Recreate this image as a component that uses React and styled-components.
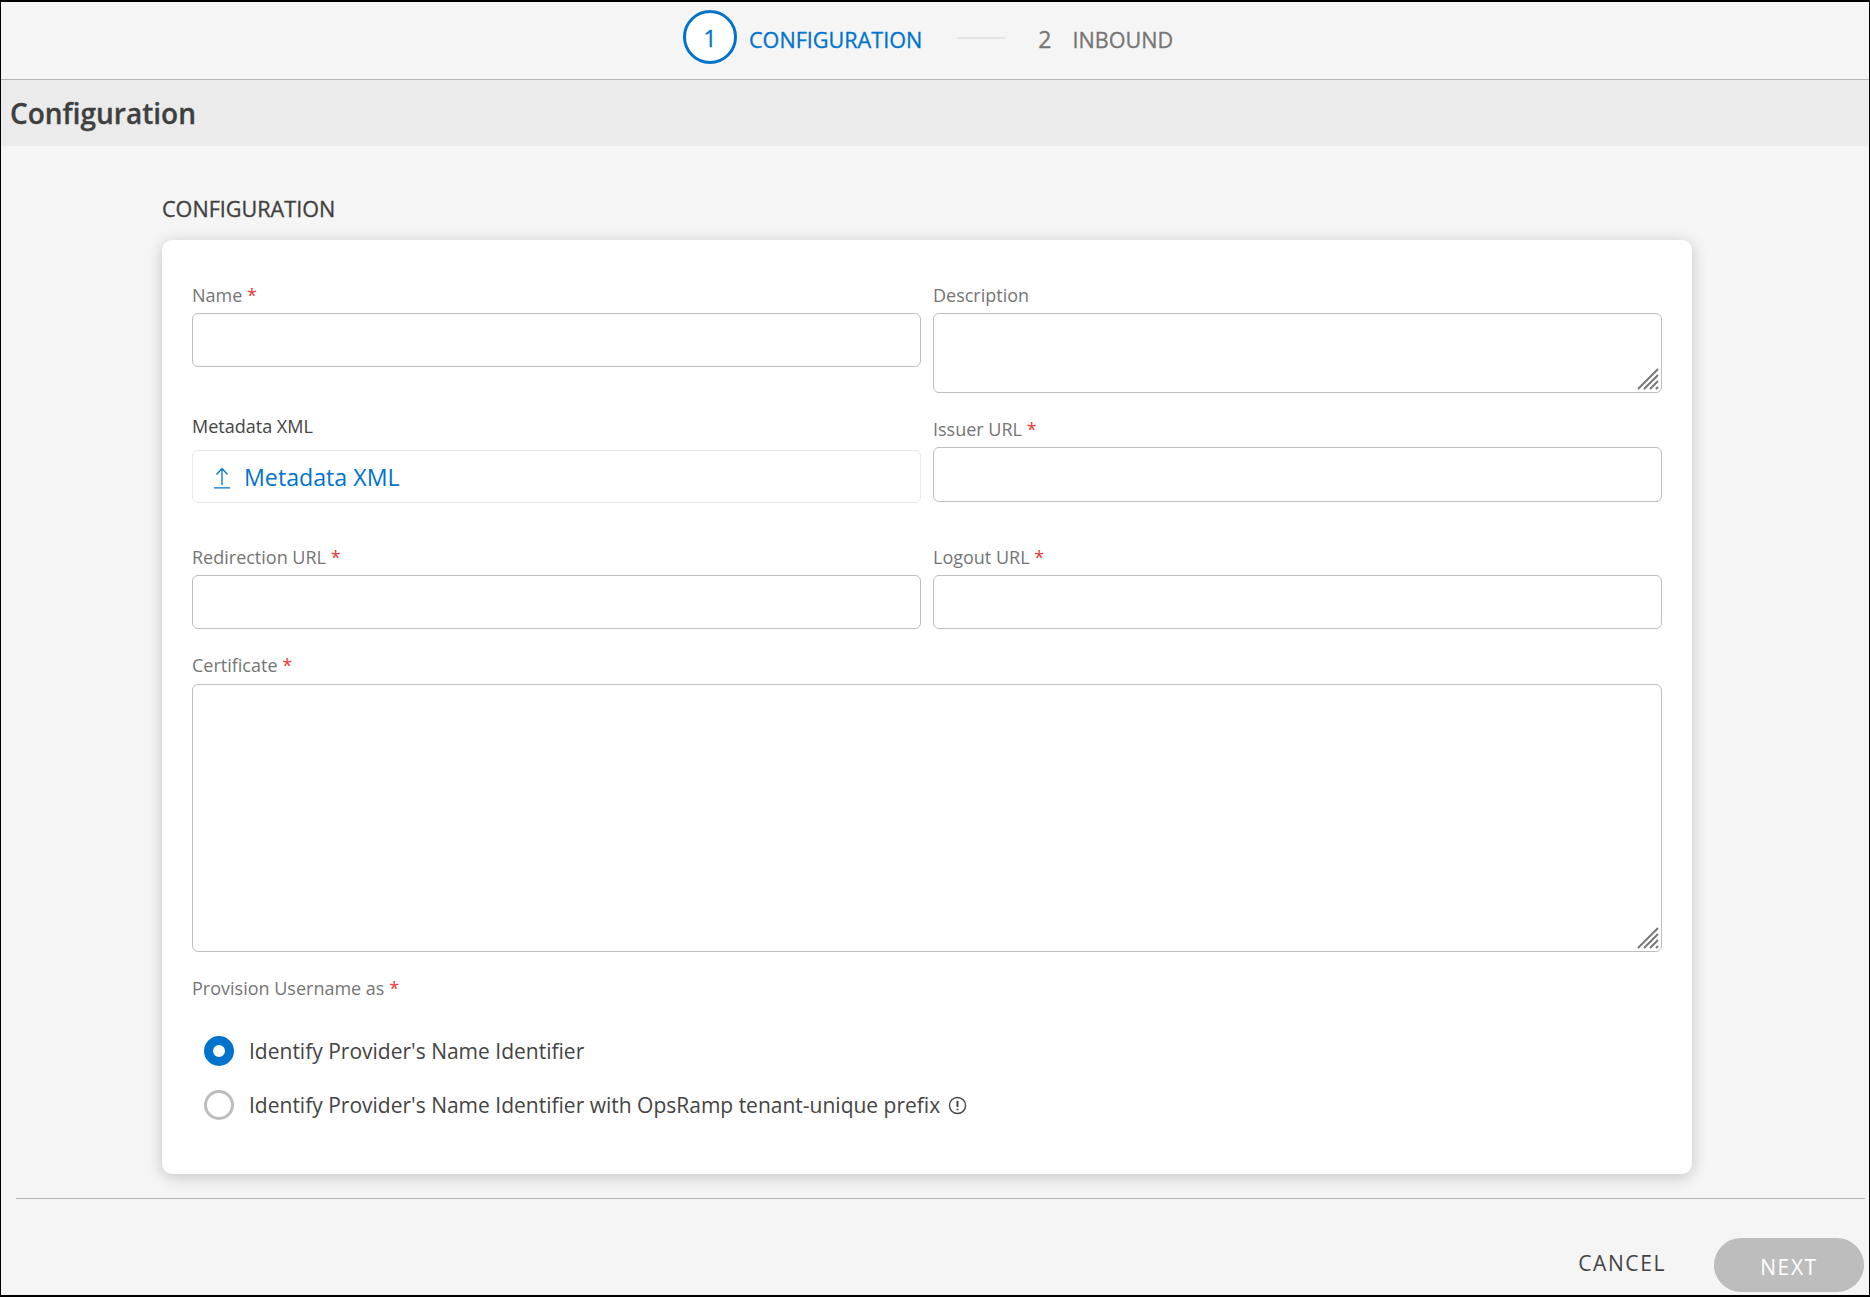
import React from "react";
import styled, { createGlobalStyle } from "styled-components";

const Global = createGlobalStyle`
  html, body { margin: 0; padding: 0; background: #f5f5f5; }
  * { box-sizing: border-box; }
  body { font-family: "Open Sans", "Noto Sans", sans-serif; }
`;

const Page = styled.div`
  width: 1870px;
  height: 1297px;
  display: flex;
  flex-direction: column;
  background: #f5f5f5;
  border: 1px solid #000;
  border-top-width: 2px;
  border-bottom-width: 2px;
  overflow: hidden;
`;

const Stepper = styled.header`
  height: 78px;
  flex: none;
  border-bottom: 1px solid #b5b5b5;
  display: flex;
  align-items: flex-start;
  padding: 8px 0 0 682px;
`;

const StepCircle = styled.div`
  width: 54px;
  height: 54px;
  flex: none;
  border-radius: 50%;
  border: 3px solid #0073cc;
  background: #fff;
  color: #0073cc;
  font-size: 23px;
  -webkit-text-stroke: 0.3px #0073cc;
  padding-top: 1px;
  display: flex;
  align-items: center;
  justify-content: center;
`;

const StepLabel = styled.span`
  font-size: 21.6px;
  -webkit-text-stroke: 0.3px currentColor;
  line-height: 28px;
  margin-top: 16px;
  color: ${(p) => (p.$active ? "#0073cc" : "#757575")};
  margin-left: ${(p) => p.$left}px;
`;

const StepLine = styled.span`
  width: 48px;
  height: 2px;
  flex: none;
  margin: 27px 0 0 35px;
  background: #e4e4e4;
`;

const StepNumber = styled.span`
  font-size: 23px;
  -webkit-text-stroke: 0.3px #757575;
  line-height: 30px;
  margin: 14px 0 0 33px;
  color: #757575;
`;

const TitleBand = styled.div`
  height: 66px;
  flex: none;
  background: #ebebeb;
  display: flex;
  align-items: center;
  padding-left: 9px;
`;

const Title = styled.h1`
  margin: 0;
  font-size: 28px;
  font-weight: 600;
  -webkit-text-stroke: 0.3px #3f3f3f;
  color: #3f3f3f;
`;

const Content = styled.main`
  flex: 1;
  padding: 49px 177px 0 161px;
`;

const SectionTitle = styled.h2`
  margin: 0 0 17px;
  font-size: 21.6px;
  -webkit-text-stroke: 0.3px #3f3f3f;
  line-height: 28px;
  font-weight: 400;
  color: #3f3f3f;
`;

const Card = styled.section`
  width: 1530px;
  height: 934px;
  background: #fff;
  border-radius: 10px;
  box-shadow: 0 3px 16px rgba(0, 0, 0, 0.2);
  padding: 45px 30px 0;
`;

const Row = styled.div`
  display: grid;
  grid-template-columns: ${(p) => (p.$full ? "1fr" : "729px 729px")};
  column-gap: 12px;
  margin-bottom: ${(p) => p.$after}px;
  align-items: start;
`;

const Field = styled.div`
  display: flex;
  flex-direction: column;
`;

const Label = styled.label`
  display: block;
  font-size: 18px;
  line-height: 20px;
  height: 20px;
  margin-bottom: ${(p) => p.$below ?? 8}px;
  color: #757575;
`;

const UploadLabel = styled.label`
  font-size: 18px;
  line-height: 14px;
  height: 14px;
  margin-bottom: 17px;
  color: #444;
`;

const Star = styled.span`
  color: #e53935;
`;

const Input = styled.input`
  display: block;
  width: 100%;
  height: ${(p) => p.$h}px;
  background: #fff;
  border: 1px solid #bdbdbd;
  border-radius: 6px;
  outline: none;
`;

const AreaWrap = styled.div`
  position: relative;
  height: ${(p) => p.$h}px;
`;

const Area = styled.textarea`
  display: block;
  width: 100%;
  height: 100%;
  resize: none;
  background: #fff;
  border: 1px solid #bdbdbd;
  border-radius: 6px;
  outline: none;
`;

const GripIcon = styled.svg`
  position: absolute;
  right: 2px;
  bottom: 2px;
  width: 24px;
  height: 24px;
`;

const Upload = styled.div`
  height: 53px;
  display: flex;
  align-items: center;
  gap: 12px;
  padding-left: 19px;
  background: #fff;
  border: 1px solid #e8e8e8;
  border-radius: 6px;
  color: #0073cc;
  font-size: 23.2px;
`;

const RadioRow = styled.div`
  display: flex;
  align-items: center;
  height: 30px;
  margin: ${(p) => p.$top}px 0 0 12px;
  font-size: 21px;
  color: #444;
`;

const RadioDot = styled.span`
  width: 30px;
  height: 30px;
  flex: none;
  border-radius: 50%;
  margin-right: 15px;
  background: #fff;
  border: ${(p) => (p.$on ? "9px solid #0073cc" : "3px solid #bdbdbd")};
`;

const InfoIcon = styled.svg`
  width: 19px;
  height: 19px;
  margin-left: 8px;
  flex: none;
`;

const Divider = styled.hr`
  flex: none;
  height: 1px;
  border: 0;
  margin: 0 4px 0 15px;
  background: #b5b5b5;
`;

const Footer = styled.footer`
  height: 96px;
  flex: none;
  display: flex;
  align-items: flex-start;
  justify-content: flex-end;
  padding: 39px 5px 0 0;
`;

const CancelButton = styled.button`
  border: 0;
  background: none;
  padding: 0;
  height: 50px;
  margin-right: 48px;
  font: 400 21px "Open Sans", sans-serif;
  letter-spacing: 1.6px;
  color: #444;
`;

const NextButton = styled.button`
  width: 150px;
  height: 54px;
  border: 0;
  border-radius: 27px;
  background: #bdbdbd;
  color: #fff;
  padding: 4px 0 0;
  font: 400 21px "Open Sans", sans-serif;
  letter-spacing: 1.6px;
`;

const Req = () => <Star> *</Star>;

const Grip = () => (
  <GripIcon viewBox="0 0 24 24" stroke="#777" strokeWidth="2" fill="none">
    <path d="M2 22 L22 2 M8 22 L22 8 M14 22 L22 14 M20 22 L22 20" />
  </GripIcon>
);

export default function App() {
  return (
    <Page>
      <Global />
      <Stepper>
        <StepCircle>1</StepCircle>
        <StepLabel $active $left={12}>CONFIGURATION</StepLabel>
        <StepLine />
        <StepNumber>2</StepNumber>
        <StepLabel $left={21}>INBOUND</StepLabel>
      </Stepper>
      <TitleBand>
        <Title>Configuration</Title>
      </TitleBand>
      <Content>
        <SectionTitle>CONFIGURATION</SectionTitle>
        <Card>
          <Row $after={26}>
            <Field>
              <Label>Name<Req /></Label>
              <Input $h={54} />
            </Field>
            <Field>
              <Label>Description</Label>
              <AreaWrap $h={80}><Area /><Grip /></AreaWrap>
            </Field>
          </Row>
          <Row $after={44}>
            <Field>
              <UploadLabel>Metadata XML</UploadLabel>
              <Upload>
                <svg width="20" height="24" viewBox="0 0 20 24" fill="none" stroke="#0073cc" strokeWidth="1.3">
                  <path d="M10 20V3.5M4.5 9.5L10 3.5l5.500 6M2 22.800h16" />
                </svg>
                Metadata XML
              </Upload>
            </Field>
            <Field>
              <Label>Issuer URL<Req /></Label>
              <Input $h={55} />
            </Field>
          </Row>
          <Row $after={26}>
            <Field>
              <Label>Redirection URL<Req /></Label>
              <Input $h={54} />
            </Field>
            <Field>
              <Label>Logout URL<Req /></Label>
              <Input $h={54} />
            </Field>
          </Row>
          <Row $full $after={26}>
            <Field>
              <Label $below={9}>Certificate<Req /></Label>
              <AreaWrap $h={268}><Area /><Grip /></AreaWrap>
            </Field>
          </Row>
          <Label as="div">Provision Username as<Req /></Label>
          <RadioRow $top={38}>
            <RadioDot $on />
            Identify Provider's Name Identifier
          </RadioRow>
          <RadioRow $top={24}>
            <RadioDot />
            Identify Provider's Name Identifier with OpsRamp tenant-unique prefix
            <InfoIcon viewBox="0 0 18 18" fill="none" stroke="#444" strokeWidth="1.3">
              <circle cx="9" cy="9" r="7.6" />
              <path d="M9 4.6v5.800M9 12v1.600" strokeWidth="1.8" />
            </InfoIcon>
          </RadioRow>
        </Card>
      </Content>
      <Divider />
      <Footer>
        <CancelButton>CANCEL</CancelButton>
        <NextButton>NEXT</NextButton>
      </Footer>
    </Page>
  );
}
